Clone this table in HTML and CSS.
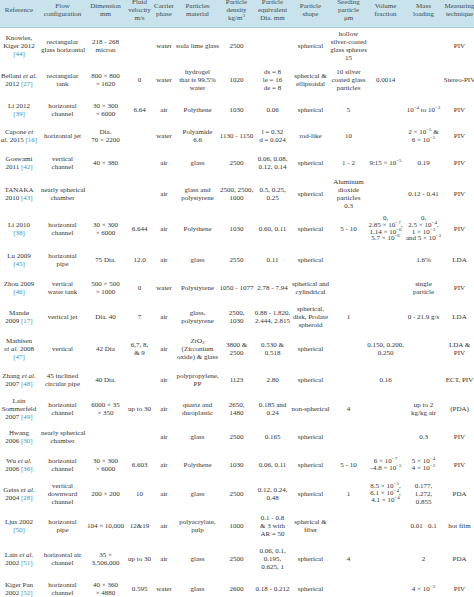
FILE: index.html
```html
<!DOCTYPE html>
<html>
<head>
<meta charset="utf-8">
<link rel="stylesheet" href="styles.css">
</head>
<body>
<table class="data">
<colgroup>
<col class="c1"><col class="c2"><col class="c3"><col class="c4"><col class="c5"><col class="c6"><col class="c7"><col class="c8"><col class="c9"><col class="c10"><col class="c11"><col class="c12"><col class="c13">
</colgroup>
<thead>
<tr>
<th>Reference</th>
<th>Flow<br>configuration</th>
<th>Dimension<br>mm</th>
<th>Fluid<br>velocity<br>m/s</th>
<th>Carrier<br>phase</th>
<th>Particles<br>material</th>
<th>Particle<br>density<br>kg/m<sup>3</sup></th>
<th>Particle<br>equivalent<br>Dia. mm</th>
<th>Particle<br>shape</th>
<th>Seeding<br>particle<br>μm</th>
<th>Volume<br>fraction</th>
<th>Mass<br>loading</th>
<th>Measuring<br>technique</th>
</tr>
</thead>
<tbody>
<tr>
<td>Knowles,<br>Kiger 2012<br><span class="ref">[44]</span></td>
<td>rectangular<br>glass horizontal</td>
<td>218 - 268<br>micron</td>
<td></td>
<td>water</td>
<td>soda lime glass</td>
<td>2500</td>
<td></td>
<td>spherical</td>
<td>hollow<br>silver-coated<br>glass spheres<br>15</td>
<td></td>
<td></td>
<td>PIV</td>
</tr>
<tr>
<td>Bellani <i>et al.</i><br>2012 <span class="ref">[27]</span></td>
<td>rectangular<br>tank</td>
<td>800 × 800<br>× 1620</td>
<td>0</td>
<td>water</td>
<td>hydrogel<br>that is 99.5%<br>water</td>
<td>1020</td>
<td>ds = 8<br>le = 16<br>de = 8</td>
<td>spherical &amp;<br>ellipsoidal</td>
<td>10 silver<br>coated glass<br>particles</td>
<td>0.0014</td>
<td></td>
<td>Stereo-PIV</td>
</tr>
<tr>
<td>Li 2012<br><span class="ref">[39]</span></td>
<td>horizontal<br>channel</td>
<td>30 × 300<br>× 6000</td>
<td>6.64</td>
<td>air</td>
<td>Polythene</td>
<td>1030</td>
<td>0.06</td>
<td>spherical</td>
<td>5</td>
<td></td>
<td>10<sup>−4</sup> to 10<sup>−3</sup></td>
<td>PIV</td>
</tr>
<tr>
<td>Capone <i>et</i><br><i>al.</i> 2015 <span class="ref">[16]</span></td>
<td>horizontal jet</td>
<td>Dia.<br>70 × 2200</td>
<td></td>
<td>water</td>
<td>Polyamide<br>6.6</td>
<td>1130 - 1150</td>
<td>l = 0.32<br>d = 0.024</td>
<td>rod-like</td>
<td>10</td>
<td></td>
<td>2 × 10<sup>−5</sup> &amp;<br>6 × 10<sup>−5</sup></td>
<td>PIV</td>
</tr>
<tr>
<td>Goswami<br>2011 <span class="ref">[42]</span></td>
<td>vertical<br>channel</td>
<td>40 × 380</td>
<td></td>
<td>air</td>
<td>glass</td>
<td>2500</td>
<td>0.06, 0.08,<br>0.12, 0.14</td>
<td>spherical</td>
<td>1 - 2</td>
<td>9:15 × 10<sup>−5</sup></td>
<td>0.19</td>
<td>PIV</td>
</tr>
<tr>
<td>TANAKA<br>2010 <span class="ref">[43]</span></td>
<td>nearly spherical<br>chamber</td>
<td></td>
<td></td>
<td>air</td>
<td>glass and<br>polystyrene</td>
<td>2500, 2500,<br>1000</td>
<td>0.5, 0.25,<br>0.25</td>
<td>spherical</td>
<td>Aluminum<br>dioxide<br>particles<br>0.3</td>
<td></td>
<td>0.12 - 0.41</td>
<td>PIV</td>
</tr>
<tr>
<td>Li 2010<br><span class="ref">[38]</span></td>
<td>horizontal<br>channel</td>
<td>30 × 300<br>× 6000</td>
<td>6.644</td>
<td>air</td>
<td>Polythene</td>
<td>1030</td>
<td>0.60, 0.11</td>
<td>spherical</td>
<td>5 - 10</td>
<td class="tight">0,<br>2.85 × 10<sup>−7</sup>,<br>1.14 × 10<sup>−6</sup><br>5.7 × 10<sup>−6</sup></td>
<td class="tight">0,<br>2.5 × 10<sup>−4</sup>,<br>1 × 10<sup>−3</sup><br>and 5 × 10<sup>−3</sup></td>
<td>PIV</td>
</tr>
<tr>
<td>Lu 2009<br><span class="ref">[45]</span></td>
<td>horizontal<br>pipe</td>
<td>75 Dia.</td>
<td>12.0</td>
<td>air</td>
<td>glass</td>
<td>2550</td>
<td>0.11</td>
<td>spherical</td>
<td></td>
<td></td>
<td>1.6%</td>
<td>LDA</td>
</tr>
<tr>
<td>Zhou 2009<br><span class="ref">[46]</span></td>
<td>vertical<br>water tank</td>
<td>500 × 500<br>× 1000</td>
<td>0</td>
<td>water</td>
<td>Polystyrene</td>
<td>1050 - 1077</td>
<td>2.78 - 7.94</td>
<td>spherical and<br>cylindrical</td>
<td></td>
<td></td>
<td>single<br>particle</td>
<td>PIV</td>
</tr>
<tr>
<td>Mandø<br>2009 <span class="ref">[17]</span></td>
<td>vertical jet</td>
<td>Dia. 40</td>
<td>7</td>
<td>air</td>
<td>glass,<br>polystyrene</td>
<td>2500,<br>1030</td>
<td>0.88 - 1.820,<br>2.444, 2.815</td>
<td>spherical,<br>disk, Prolate<br>spheroid</td>
<td>1</td>
<td></td>
<td>0 - 21.9 g/s</td>
<td>LDA</td>
</tr>
<tr>
<td>Mathisen<br><i>et al.</i> 2008<br><span class="ref">[47]</span></td>
<td>vertical</td>
<td>42 Dia</td>
<td>6,7, 8,<br>&amp; 9</td>
<td>air</td>
<td>ZrO<sub>2</sub><br>(Zirconium<br>oxide) &amp; glass</td>
<td>3800 &amp;<br>2500</td>
<td>0.530 &amp;<br>0.518</td>
<td>spherical</td>
<td></td>
<td>0.150, 0.200,<br>0.250</td>
<td></td>
<td>LDA &amp;<br>PIV</td>
</tr>
<tr>
<td>Zhang <i>et al.</i><br>2007 <span class="ref">[48]</span></td>
<td>45 inclined<br>circular pipe</td>
<td>40 Dia.</td>
<td></td>
<td>air</td>
<td>polypropylene,<br>PP</td>
<td>1123</td>
<td>2.80</td>
<td>spherical</td>
<td></td>
<td>0.16</td>
<td></td>
<td>ECT, PIV</td>
</tr>
<tr>
<td>Lain<br>Sommerfeld<br>2007 <span class="ref">[49]</span></td>
<td>horizontal<br>channel</td>
<td>6000 × 35<br>× 350</td>
<td>up to 30</td>
<td>air</td>
<td>quartz and<br>duroplastic</td>
<td>2650,<br>1480</td>
<td>0.185 and<br>0.24</td>
<td>non-spherical</td>
<td>4</td>
<td></td>
<td>up to 2<br>kg/kg air</td>
<td>(PDA)</td>
</tr>
<tr>
<td>Hwang<br>2006 <span class="ref">[30]</span></td>
<td>nearly spherical<br>chamber</td>
<td></td>
<td></td>
<td>air</td>
<td>glass</td>
<td>2500</td>
<td>0.165</td>
<td>spherical</td>
<td></td>
<td></td>
<td>0.3</td>
<td>PIV</td>
</tr>
<tr>
<td>Wu <i>et al.</i><br>2006 <span class="ref">[36]</span></td>
<td>horizontal<br>channel</td>
<td>30 × 300<br>× 6000</td>
<td>6.603</td>
<td>air</td>
<td>Polythene</td>
<td>1030</td>
<td>0.06, 0.11</td>
<td>spherical</td>
<td>5 - 10</td>
<td class="tight">6 × 10<sup>−7</sup><br>–4.8 × 10<sup>−5</sup></td>
<td class="tight">5 × 10<sup>−4</sup><br>4 × 10<sup>−2</sup></td>
<td>PIV</td>
</tr>
<tr>
<td>Geiss <i>et al.</i><br>2004 <span class="ref">[28]</span></td>
<td>vertical<br>downward<br>channel</td>
<td>200 × 200</td>
<td>10</td>
<td>air</td>
<td>glass</td>
<td>2500</td>
<td>0.12, 0.24,<br>0.48</td>
<td>spherical</td>
<td>1</td>
<td class="tight">8.5 × 10<sup>−5</sup>,<br>6.1 × 10<sup>−4</sup>,<br>4.1 × 10<sup>−4</sup></td>
<td>0.177,<br>1.272,<br>0.855</td>
<td>PDA</td>
</tr>
<tr>
<td>Ljus 2002<br><span class="ref">[50]</span></td>
<td>horizontal<br>pipe</td>
<td>104 × 10,000</td>
<td>12&amp;19</td>
<td>air</td>
<td>polyacrylate,<br>pulp</td>
<td>1000</td>
<td>0.1 - 0.8<br>&amp; 3 with<br>AR = 50</td>
<td>spherical &amp;<br>fiber</td>
<td></td>
<td></td>
<td>0.01&nbsp;&nbsp; 0.1</td>
<td>hot film</td>
</tr>
<tr>
<td>Lain <i>et al.</i><br>2002 <span class="ref">[51]</span></td>
<td>horizontal air<br>channel</td>
<td>35 ×<br>3,506,000</td>
<td>up to 30</td>
<td>air</td>
<td>glass</td>
<td>2500</td>
<td>0.06, 0.1,<br>0.195,<br>0.625, 1</td>
<td>spherical</td>
<td>4</td>
<td></td>
<td>2</td>
<td>PDA</td>
</tr>
<tr>
<td>Kiger Pan<br>2002 <span class="ref">[52]</span></td>
<td>horizontal<br>channel</td>
<td>40 × 360<br>× 4880</td>
<td>0.595</td>
<td>water</td>
<td>glass</td>
<td>2600</td>
<td>0.18 - 0.212</td>
<td>spherical</td>
<td></td>
<td></td>
<td>4 × 10<sup>−3</sup></td>
<td>PIV</td>
</tr>
</tbody>
</table>
</body>
</html>
```
FILE: styles.css
```css
html, body {
  margin: 0;
  padding: 0;
  overflow: hidden;
  background: #ffffff;
}

.data {
  table-layout: fixed;
  width: 479px;
  margin: -7px 0 0 -3px;
  border-collapse: separate;
  border-spacing: 0;
  font-family: "Liberation Serif", "Times New Roman", serif;
  font-size: 7px;
  line-height: 8px;
  color: #333333;
}

.c1 { width: 44px; }
.c2 { width: 43px; }
.c3 { width: 43px; }
.c4 { width: 25px; }
.c5 { width: 24px; }
.c6 { width: 43px; }
.c7 { width: 35px; }
.c8 { width: 37px; }
.c9 { width: 39px; }
.c10 { width: 37px; }
.c11 { width: 37px; }
.c12 { width: 39px; }
.c13 { width: 33px; }

.data th,
.data td {
  padding: 0;
  text-align: center;
  vertical-align: middle;
  white-space: nowrap;
  font-weight: normal;
}

.data thead tr { height: 35px; }

.data th {
  background: #c8e3eb;
  color: #3d4a4f;
  border-bottom: 1px solid #a9cdd9;
}

.data sup {
  font-size: 5px;
  line-height: 0;
  vertical-align: 3px;
}

.data sub {
  font-size: 5px;
  line-height: 0;
  vertical-align: -1px;
}

.ref { color: #4a8fbd; }

.data td.tight { line-height: 6.8px; }

.data tbody tr:nth-child(1) { height: 35px; }
.data tbody tr:nth-child(2) { height: 33px; }
.data tbody tr:nth-child(3) { height: 27px; }
.data tbody tr:nth-child(4) { height: 26px; }
.data tbody tr:nth-child(5) { height: 28px; }
.data tbody tr:nth-child(6) { height: 34px; }
.data tbody tr:nth-child(7) { height: 35px; }
.data tbody tr:nth-child(8) { height: 28px; }
.data tbody tr:nth-child(9) { height: 27px; }
.data tbody tr:nth-child(10) { height: 32px; }
.data tbody tr:nth-child(11) { height: 32px; }
.data tbody tr:nth-child(12) { height: 29px; }
.data tbody tr:nth-child(13) { height: 29px; }
.data tbody tr:nth-child(14) { height: 28px; }
.data tbody tr:nth-child(15) { height: 27px; }
.data tbody tr:nth-child(16) { height: 31px; }
.data tbody tr:nth-child(17) { height: 34px; }
.data tbody tr:nth-child(18) { height: 31px; }
.data tbody tr:nth-child(19) { height: 30px; }
```
